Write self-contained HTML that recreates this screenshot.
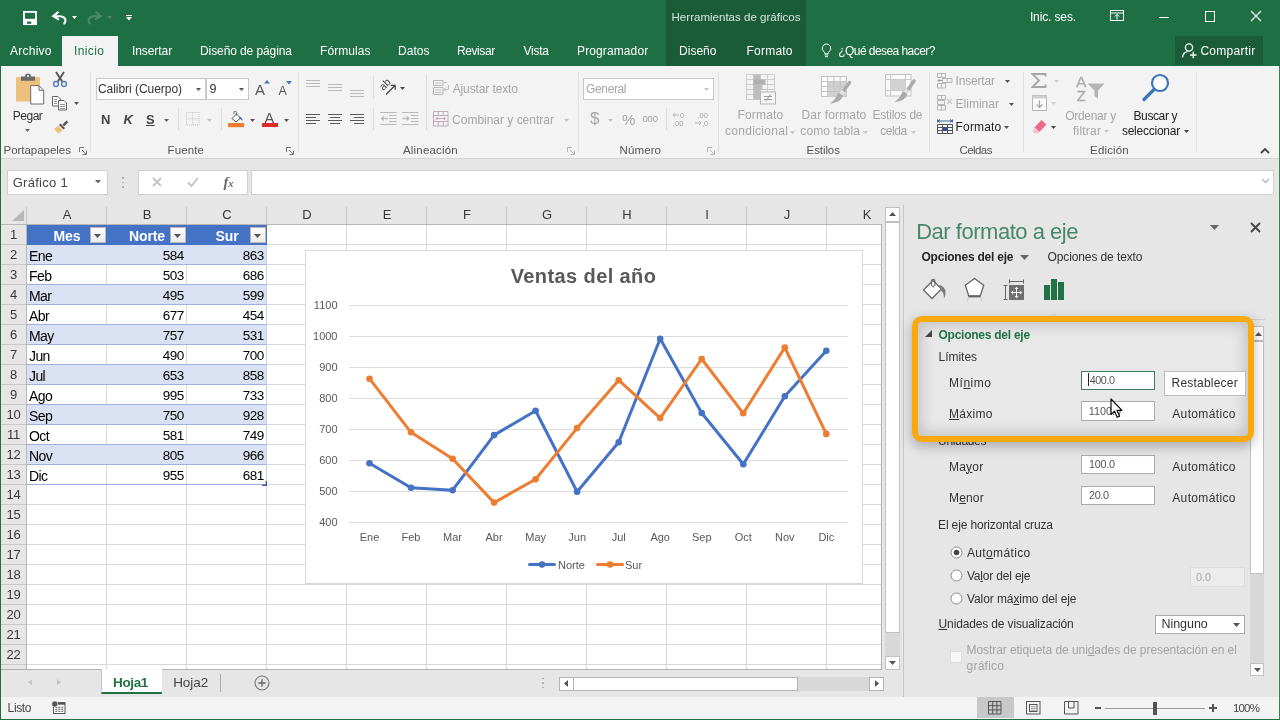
<!DOCTYPE html>
<html lang="es"><head><meta charset="utf-8"><title>Excel - Dar formato a eje</title>
<style>
html,body{margin:0;padding:0}
body{width:1280px;height:720px;overflow:hidden;position:relative;background:#e6e6e6;font-family:"Liberation Sans",sans-serif;font-size:12px;color:#444}
.b{position:absolute;display:block;box-sizing:border-box}
.t{position:absolute;white-space:nowrap;line-height:20px;height:20px}
.w{color:#fff}
.tab{font-size:12.5px;color:#fff}
.g{color:#a6a6a6}
.d{color:#333}
.rl{font-size:11.5px;color:#555}
.rt{font-size:12px}
.cell{font-size:14px;color:#000;letter-spacing:-0.6px}
.num{font-size:13.5px;letter-spacing:-0.5px}
.ch{font-size:13px;color:#383838}
.ax{font-size:11px;color:#595959}
.pn{font-size:12.5px;color:#333}
u{text-decoration:underline;text-underline-offset:1px}
#app{position:absolute;left:0;top:0;width:1280px;height:720px;will-change:transform}
</style></head><body><div id="app">
<div class="b" style="left:0px;top:0px;width:1280px;height:66px;background:#1f6f45"></div>
<div class="b" style="left:666px;top:0px;width:140px;height:66px;background:#1a5c38"></div>
<div class="t " style="left:671.56px;top:7px;font-size:11.5px;letter-spacing:0.017px;color:#d5e5dc">Herramientas de gráficos</div>
<div class="b" style="left:62px;top:36px;width:56px;height:30px;background:#f3f3f3"></div>
<div class="t w" style="left:9.98px;top:41px;font-size:12px;letter-spacing:0.251px;">Archivo</div>
<div class="t w" style="left:131.9px;top:41px;font-size:12px;letter-spacing:-0.055px;">Insertar</div>
<div class="t w" style="left:200.02px;top:41px;font-size:12px;letter-spacing:-0.096px;">Diseño de página</div>
<div class="t w" style="left:320.02px;top:41px;font-size:12px;letter-spacing:0.057px;">Fórmulas</div>
<div class="t w" style="left:398.02px;top:41px;font-size:12px;letter-spacing:0.018px;">Datos</div>
<div class="t w" style="left:457.02px;top:41px;font-size:12px;letter-spacing:-0.417px;">Revisar</div>
<div class="t w" style="left:523.45px;top:41px;font-size:12px;letter-spacing:-0.231px;">Vista</div>
<div class="t w" style="left:577.02px;top:41px;font-size:12px;letter-spacing:0.114px;">Programador</div>
<div class="t w" style="left:679.02px;top:41px;font-size:12px;letter-spacing:0.024px;">Diseño</div>
<div class="t w" style="left:746.52px;top:41px;font-size:12px;letter-spacing:0.217px;">Formato</div>
<div class="t w" style="left:838.24px;top:41px;font-size:12px;letter-spacing:-0.555px;">¿Qué desea hacer?</div>
<div class="t " style="left:73.9px;top:41px;font-size:12px;letter-spacing:0.418px;color:#217346">Inicio</div>
<svg class="b" style="left:820px;top:43px;" width="13" height="15" viewBox="0 0 13 15"><path d="M6.5 1a4.3 4.3 0 0 0-2.6 7.7c.5.5.8 1 .8 1.8h3.6c0-.8.3-1.3.8-1.8A4.3 4.3 0 0 0 6.5 1z" fill="none" stroke="#fff" stroke-width="1"/><path d="M4.7 12h3.6M5 13.7h3" stroke="#fff" stroke-width="1" fill="none"/></svg>
<svg class="b" style="left:22px;top:10px;" width="16" height="16" viewBox="0 0 16 16"><rect x="2" y="1.9" width="12" height="12.2" fill="none" stroke="#fff" stroke-width="1.9"/><rect x="2" y="8.8" width="12" height="5.5" fill="#fff"/><rect x="5" y="11.6" width="4.3" height="2.2" fill="#1f6f45"/></svg>
<svg class="b" style="left:51px;top:10px;" width="17" height="16" viewBox="0 0 17 16"><path d="M7.5 1.8L2.3 6.2l5.6 3.5" fill="none" stroke="#fff" stroke-width="2.1"/><path d="M3.5 6.2h5.5c3.5 0 5.5 2.2 5.5 4.6 0 1.5-.800 2.6-2 3.2" fill="none" stroke="#fff" stroke-width="2.1"/></svg>
<svg class="b" style="left:72px;top:16px;" width="5" height="3" viewBox="0 0 5 3"><path d="M0 0H5L2.5 3Z" fill="#fff"/></svg>
<svg class="b" style="left:86px;top:10px;" width="17" height="16" viewBox="0 0 17 16"><path d="M9.5 1.8l5.2 4.4-5.6 3.5" fill="none" stroke="#4a8c69" stroke-width="2.1"/><path d="M13.5 6.2H8c-3.5 0-5.5 2.2-5.5 4.6 0 1.5.80 2.6 2 3.2" fill="none" stroke="#4a8c69" stroke-width="2.1"/></svg>
<svg class="b" style="left:107px;top:16px;" width="5" height="3" viewBox="0 0 5 3"><path d="M0 0H5L2.5 3Z" fill="#4a8c69"/></svg>
<div class="b" style="left:126px;top:14.5px;width:6px;height:1.5px;background:#fff"></div>
<svg class="b" style="left:126px;top:17.25px;" width="6" height="3.5" viewBox="0 0 6 3.5"><path d="M0 0H6L3 3.5Z" fill="#fff"/></svg>
<div class="t w" style="left:1029.9px;top:7px;font-size:12px;letter-spacing:-0.128px;">Inic. ses.</div>
<svg class="b" style="left:1110px;top:10px;" width="15" height="12" viewBox="0 0 15 12"><rect x=".5" y=".5" width="13" height="10" fill="none" stroke="#fff"/><path d="M.5 3h13" stroke="#fff"/><path d="M7 9.5v-5M4.8 6.5L7 4.3l2.2 2.2" fill="none" stroke="#fff"/></svg>
<div class="b" style="left:1159px;top:16.5px;width:10px;height:1px;background:#fff"></div>
<div class="b" style="left:1204.5px;top:11px;width:10.5px;height:10.5px;border:1px solid #fff"></div>
<svg class="b" style="left:1250px;top:10px;" width="12" height="12" viewBox="0 0 12 12"><path d="M1 1l10 10M11 1L1 11" stroke="#fff" stroke-width="1.1"/></svg>
<div class="b" style="left:1175px;top:36px;width:87.5px;height:28.5px;background:#1a5c38"></div>
<svg class="b" style="left:1181px;top:42px;" width="17" height="17" viewBox="0 0 17 17"><circle cx="8" cy="5.5" r="3.6" fill="none" stroke="#fff" stroke-width="1.3"/><path d="M1.5 15.5c.3-3.2 2.3-5.3 5-5.8" fill="none" stroke="#fff" stroke-width="1.3"/><path d="M9 13h6.5M12.25 9.8v6.4" stroke="#fff" stroke-width="1.3"/></svg>
<div class="t w" style="left:1200.4px;top:41px;font-size:12px;letter-spacing:0.264px;">Compartir</div>
<div class="b" style="left:0px;top:66px;width:1280px;height:92px;background:#f3f3f3"></div>
<div class="b" style="left:0px;top:158px;width:1280px;height:1px;background:#d4d4d4"></div>
<div class="b" style="left:90px;top:72px;width:1px;height:80px;background:#e0e0e0"></div>
<div class="b" style="left:297.5px;top:72px;width:1px;height:80px;background:#e0e0e0"></div>
<div class="b" style="left:578px;top:72px;width:1px;height:80px;background:#e0e0e0"></div>
<div class="b" style="left:718px;top:72px;width:1px;height:80px;background:#e0e0e0"></div>
<div class="b" style="left:929px;top:72px;width:1px;height:80px;background:#e0e0e0"></div>
<div class="b" style="left:1023px;top:72px;width:1px;height:80px;background:#e0e0e0"></div>
<div class="b" style="left:1196px;top:72px;width:1px;height:80px;background:#e0e0e0"></div>
<div class="t " style="left:3.56px;top:140px;font-size:11.5px;letter-spacing:-0.037px;color:#555">Portapapeles</div>
<div class="t " style="left:167.56px;top:140px;font-size:11.5px;letter-spacing:0.13px;color:#555">Fuente</div>
<div class="t " style="left:402.98px;top:140px;font-size:11.5px;letter-spacing:0.189px;color:#555">Alineación</div>
<div class="t " style="left:619.56px;top:140px;font-size:11.5px;letter-spacing:0.102px;color:#555">Número</div>
<div class="t " style="left:806.56px;top:140px;font-size:11.5px;letter-spacing:-0.085px;color:#555">Estilos</div>
<div class="t " style="left:959.42px;top:140px;font-size:11.5px;letter-spacing:-0.562px;color:#555">Celdas</div>
<div class="t " style="left:1090.06px;top:140px;font-size:11.5px;letter-spacing:0.16px;color:#555">Edición</div>
<svg class="b" style="left:79px;top:147px;" width="8" height="8" viewBox="0 0 8 8"><path d="M.5 5V.500H5" fill="none" stroke="#777"/><path d="M3 3l4 4M7.5 3.5v4h-4" fill="none" stroke="#777"/></svg>
<svg class="b" style="left:286px;top:147px;" width="8" height="8" viewBox="0 0 8 8"><path d="M.5 5V.500H5" fill="none" stroke="#777"/><path d="M3 3l4 4M7.5 3.5v4h-4" fill="none" stroke="#777"/></svg>
<svg class="b" style="left:567px;top:147px;" width="8" height="8" viewBox="0 0 8 8"><path d="M.5 5V.500H5" fill="none" stroke="#b5b5b5"/><path d="M3 3l4 4M7.5 3.5v4h-4" fill="none" stroke="#b5b5b5"/></svg>
<svg class="b" style="left:707px;top:147px;" width="8" height="8" viewBox="0 0 8 8"><path d="M.5 5V.500H5" fill="none" stroke="#b5b5b5"/><path d="M3 3l4 4M7.5 3.5v4h-4" fill="none" stroke="#b5b5b5"/></svg>
<svg class="b" style="left:15px;top:73px;" width="31" height="32" viewBox="0 0 31 32"><rect x="1" y="4" width="24" height="24.5" fill="#eec07e"/><path d="M6 7.8V3.5h4a3 3 0 0 1 6 0h4v4.3z" fill="#6a6a6a"/><circle cx="13" cy="3" r="1.1" fill="#f3f3f3"/><path d="M15.7 12.6h8.3l4.7 4.7v13.7h-13z" fill="#fff" stroke="#6a6a6a" stroke-width="1"/><path d="M24 12.6v4.7h4.7" fill="none" stroke="#6a6a6a"/></svg>
<div class="t " style="left:12.82px;top:105.5px;font-size:12px;letter-spacing:-0.51px;color:#333">Pegar</div>
<svg class="b" style="left:25px;top:129px;" width="5" height="3" viewBox="0 0 5 3"><path d="M0 0H5L2.5 3Z" fill="#666"/></svg>
<svg class="b" style="left:52px;top:71px;" width="16" height="17" viewBox="0 0 16 17"><path d="M4 1l6.5 10M12 1L5.5 11" stroke="#555" stroke-width="1.9" fill="none"/><circle cx="4" cy="13" r="2.4" fill="none" stroke="#5b80c2" stroke-width="1.5"/><circle cx="12" cy="13" r="2.4" fill="none" stroke="#5b80c2" stroke-width="1.5"/></svg>
<svg class="b" style="left:51.5px;top:96px;" width="16" height="15" viewBox="0 0 16 15"><path d="M.5.5h5.5l2.5 2.5v7h-8z" fill="#fff" stroke="#666"/><path d="M6.5 4.5h5.5l2.5 2.5v7h-8z" fill="#fff" stroke="#666"/><path d="M8 8.5h5M8 10.5h5M8 12.5h5M2 3.5h3M2 5.5h3M2 7.5h3" stroke="#777" stroke-width=".8"/></svg>
<svg class="b" style="left:74px;top:102px;" width="5" height="3" viewBox="0 0 5 3"><path d="M0 0H5L2.5 3Z" fill="#555"/></svg>
<svg class="b" style="left:52.5px;top:118.5px;" width="16" height="15" viewBox="0 0 16 15"><path d="M9.5 5.5l4-4 1.8 1.8-4 4z" fill="#555"/><path d="M7.5 4.5l4.5 4.5-1.5 1.5-4.5-4.5z" fill="#555"/><path d="M5.3 6.8l4.4 4.4-4.2 3.3-4.5-4.5z" fill="#edc07c"/></svg>
<div class="b" style="left:95.5px;top:77.5px;width:110px;height:22px;background:#fff;border:1px solid #c8c8c8"></div>
<div class="b" style="left:205.5px;top:77.5px;width:43.5px;height:22px;background:#fff;border:1px solid #c8c8c8;border-left:1px solid #c8c8c8"></div>
<div class="t " style="left:97.9px;top:78.5px;font-size:12px;letter-spacing:-0.037px;color:#333">Calibri (Cuerpo)</div>
<svg class="b" style="left:196px;top:87.5px;" width="5" height="3" viewBox="0 0 5 3"><path d="M0 0H5L2.5 3Z" fill="#555"/></svg>
<div class="t d" style="left:209.5px;top:78.5px;font-size:12.5px">9</div>
<svg class="b" style="left:239px;top:87.5px;" width="5" height="3" viewBox="0 0 5 3"><path d="M0 0H5L2.5 3Z" fill="#555"/></svg>
<div class="t d" style="left:255px;top:79.5px;font-size:15px;color:#555">A</div>
<svg class="b" style="left:264px;top:80px;" width="6" height="4" viewBox="0 0 6 4"><path d="M0 3.5L3 0l3 3.5z" fill="#4472c4"/></svg>
<div class="t d" style="left:278.5px;top:80.5px;font-size:12.5px;color:#555">A</div>
<svg class="b" style="left:285.5px;top:80.5px;" width="6" height="4" viewBox="0 0 6 4"><path d="M0 0h6L3 3.5z" fill="#4472c4"/></svg>
<div class="t d" style="left:101px;top:109.5px;font-weight:bold;font-size:13px;color:#444">N</div>
<div class="t d" style="left:123.5px;top:109.5px;font-weight:bold;font-style:italic;font-size:13px;color:#444">K</div>
<div class="t d" style="left:146px;top:109.5px;font-weight:bold;font-size:13px;color:#444"><u>S</u></div>
<svg class="b" style="left:164px;top:118.5px;" width="5" height="3" viewBox="0 0 5 3"><path d="M0 0H5L2.5 3Z" fill="#666"/></svg>
<div class="b" style="left:177.5px;top:108px;width:1px;height:22px;background:#dcdcdc"></div>
<svg class="b" style="left:186px;top:112px;" width="14" height="14" viewBox="0 0 14 14"><path d="M.5.5h12.5v12.5h-12.5zM6.75.5v12.5M.5 6.75h12.5" fill="none" stroke="#c4c4c4" stroke-dasharray="1 1"/></svg>
<svg class="b" style="left:207px;top:118.5px;" width="5" height="3" viewBox="0 0 5 3"><path d="M0 0H5L2.5 3Z" fill="#c4c4c4"/></svg>
<div class="b" style="left:220.5px;top:108px;width:1px;height:22px;background:#dcdcdc"></div>
<svg class="b" style="left:228px;top:111px;" width="17" height="17" viewBox="0 0 17 17"><rect x="0" y="12" width="16" height="4.2" fill="#ed7d31"/><path d="M4 7.5l4.5-4.5 4 4-4.5 4z" fill="#fff" stroke="#555" stroke-width="1"/><path d="M6 3V1.3a1.2 1.2 0 0 1 2.4 0V4.5" fill="none" stroke="#555" stroke-width=".9"/><path d="M11.5 5.5c2 .8 3.3 2.3 3.3 4.5-1.3-1.5-2.3-2-3.8-1.8" fill="#4472c4"/></svg>
<svg class="b" style="left:250px;top:118.5px;" width="5" height="3" viewBox="0 0 5 3"><path d="M0 0H5L2.5 3Z" fill="#555"/></svg>
<div class="t d" style="left:264.5px;top:107.5px;font-size:14.5px;color:#555">A</div>
<div class="b" style="left:262px;top:123px;width:16px;height:4.2px;background:#e02b2b"></div>
<svg class="b" style="left:284px;top:118.5px;" width="5" height="3" viewBox="0 0 5 3"><path d="M0 0H5L2.5 3Z" fill="#555"/></svg>
<div class="b" style="left:305.5px;top:80px;width:14.5px;height:1px;background:#b9b9b9"></div><div class="b" style="left:305.5px;top:83px;width:14.5px;height:1px;background:#b9b9b9"></div><div class="b" style="left:305.5px;top:86px;width:14.5px;height:1px;background:#b9b9b9"></div>
<div class="b" style="left:327.5px;top:84px;width:14.5px;height:1px;background:#b9b9b9"></div><div class="b" style="left:327.5px;top:87px;width:14.5px;height:1px;background:#b9b9b9"></div><div class="b" style="left:327.5px;top:90px;width:14.5px;height:1px;background:#b9b9b9"></div>
<div class="b" style="left:349.5px;top:89.5px;width:14.5px;height:1px;background:#b9b9b9"></div><div class="b" style="left:349.5px;top:92.5px;width:14.5px;height:1px;background:#b9b9b9"></div><div class="b" style="left:349.5px;top:95.5px;width:14.5px;height:1px;background:#b9b9b9"></div>
<div class="b" style="left:372.5px;top:76px;width:1px;height:23px;background:#dcdcdc"></div>
<svg class="b" style="left:378px;top:77px;" width="20" height="20" viewBox="0 0 20 20"><text x="7.5" y="10.5" text-anchor="middle" font-family="Liberation Sans,sans-serif" font-size="10.5" fill="#444" transform="rotate(-45 7.5 8)">ab</text><path d="M8 17.5L17 8.5M12.8 8.3h4.4v4.4" fill="none" stroke="#444" stroke-width="1.2"/></svg>
<svg class="b" style="left:400px;top:87px;" width="5" height="3" viewBox="0 0 5 3"><path d="M0 0H5L2.5 3Z" fill="#444"/></svg>
<div class="b" style="left:425.5px;top:75px;width:1px;height:55px;background:#dcdcdc"></div>
<svg class="b" style="left:433px;top:80px;" width="17" height="15" viewBox="0 0 17 15"><path d="M.5.5h9.5v5h-9.5zM.5 7.5h9.5v7h-9.5z" fill="none" stroke="#b9b9b9"/><path d="M2 3h6.5M2 10h6.5M2 12.5h6.5M11 2.5h3" stroke="#b9b9b9" stroke-width=".9"/><path d="M15.5 5v4.5h-4M13 7.5l-2 2 2 2" fill="none" stroke="#b9b9b9"/></svg>
<div class="t g" style="left:452.68px;top:78.5px;font-size:12px;letter-spacing:-0.115px;">Ajustar texto</div>
<div class="b" style="left:305.5px;top:114px;width:14.5px;height:1px;background:#5a5a5a"></div><div class="b" style="left:305.5px;top:117px;width:10.5px;height:1px;background:#5a5a5a"></div><div class="b" style="left:305.5px;top:120px;width:14.5px;height:1px;background:#5a5a5a"></div><div class="b" style="left:305.5px;top:123px;width:10.5px;height:1px;background:#5a5a5a"></div>
<div class="b" style="left:327.5px;top:114px;width:14.5px;height:1px;background:#5a5a5a"></div><div class="b" style="left:329.5px;top:117px;width:10.5px;height:1px;background:#5a5a5a"></div><div class="b" style="left:327.5px;top:120px;width:14.5px;height:1px;background:#5a5a5a"></div><div class="b" style="left:329.5px;top:123px;width:10.5px;height:1px;background:#5a5a5a"></div>
<div class="b" style="left:349.5px;top:114px;width:14.5px;height:1px;background:#5a5a5a"></div><div class="b" style="left:353.5px;top:117px;width:10.5px;height:1px;background:#5a5a5a"></div><div class="b" style="left:349.5px;top:120px;width:14.5px;height:1px;background:#5a5a5a"></div><div class="b" style="left:353.5px;top:123px;width:10.5px;height:1px;background:#5a5a5a"></div>
<div class="b" style="left:372.5px;top:108px;width:1px;height:22px;background:#dcdcdc"></div>
<svg class="b" style="left:380px;top:112px;" width="17" height="14" viewBox="0 0 17 14"><path d="M0 .5h16.5M9 3.5h7.5M9 6.5h7.5M9 9.5h7.5M0 12.5h16.5" stroke="#b9b9b9"/><path d="M8 6.5H2" stroke="#b9b9b9" stroke-width="1.3"/><path d="M3.8 3.8L.8 6.5l3 2.7z" fill="#b9b9b9"/></svg>
<svg class="b" style="left:401.5px;top:112px;" width="17" height="14" viewBox="0 0 17 14"><path d="M0 .5h16.5M9 3.5h7.5M9 6.5h7.5M9 9.5h7.5M0 12.5h16.5" stroke="#b9b9b9"/><path d="M.5 6.5h6" stroke="#b9b9b9" stroke-width="1.3"/><path d="M4.7 3.8l3 2.7-3 2.7z" fill="#b9b9b9"/></svg>
<svg class="b" style="left:433px;top:111px;" width="16" height="16" viewBox="0 0 16 16"><path d="M.5.5h14.5v14.5H.5zM.5 4.5h14.5M.5 10.5h14.5M5.3.50v4M10.2.50v4M5.3 10.5v4.5M10.2 10.5v4.5" fill="none" stroke="#c3a9b6"/><path d="M3 7.5h9.5M4.5 6L3 7.5 4.5 9M11 6l1.5 1.5L11 9" fill="none" stroke="#c3a9b6"/></svg>
<div class="t g" style="left:452.1px;top:109.5px;font-size:12px;letter-spacing:-0.014px;">Combinar y centrar</div>
<svg class="b" style="left:564px;top:118.5px;" width="5" height="3" viewBox="0 0 5 3"><path d="M0 0H5L2.5 3Z" fill="#c4c4c4"/></svg>
<div class="b" style="left:583px;top:77.5px;width:130.5px;height:22px;background:#fff;border:1px solid #c8c8c8"></div>
<div class="t g" style="left:586.1px;top:78.5px;font-size:12px;letter-spacing:-0.382px;">General</div>
<svg class="b" style="left:704px;top:87.5px;" width="5" height="3" viewBox="0 0 5 3"><path d="M0 0H5L2.5 3Z" fill="#c4c4c4"/></svg>
<div class="t g" style="left:590px;top:109px;font-size:17px">$</div>
<svg class="b" style="left:608px;top:118.5px;" width="5" height="3" viewBox="0 0 5 3"><path d="M0 0H5L2.5 3Z" fill="#c4c4c4"/></svg>
<div class="t g" style="left:622px;top:109.5px;font-size:15px;letter-spacing:-.5px">%</div>
<div class="t g" style="left:642.5px;top:109px;font-size:9.5px;letter-spacing:-.2px">000</div>
<div class="b" style="left:665.5px;top:108px;width:1px;height:22px;background:#dcdcdc"></div>
<svg class="b" style="left:672px;top:111px;" width="17" height="17" viewBox="0 0 17 17"><path d="M1 4h6M3 2L1 4l2 2" fill="none" stroke="#b5b5b5"/><text x="8" y="7" font-family="Liberation Sans,sans-serif" font-size="7.5" fill="#a6a6a6">0</text><text x="1" y="15" font-family="Liberation Sans,sans-serif" font-size="7.5" fill="#a6a6a6">,00</text></svg>
<svg class="b" style="left:694px;top:111px;" width="17" height="17" viewBox="0 0 17 17"><text x="3.5" y="7" font-family="Liberation Sans,sans-serif" font-size="7.5" fill="#a6a6a6">,00</text><path d="M1 12h6M5 10l2 2-2 2" fill="none" stroke="#b5b5b5"/><text x="8" y="15" font-family="Liberation Sans,sans-serif" font-size="7.5" fill="#a6a6a6">,0</text></svg>
<svg class="b" style="left:745.5px;top:73.5px;" width="31" height="31" viewBox="0 0 31 31"><path d="M0 0.5h28" stroke="#c9c9c9" stroke-width=".9"/><path d="M0 5.5h28" stroke="#c9c9c9" stroke-width=".9"/><path d="M0 10.5h28" stroke="#c9c9c9" stroke-width=".9"/><path d="M0 15.5h28" stroke="#c9c9c9" stroke-width=".9"/><path d="M0 20.5h28" stroke="#c9c9c9" stroke-width=".9"/><path d="M0 25.5h28" stroke="#c9c9c9" stroke-width=".9"/><path d="M0.5 0v25" stroke="#c9c9c9" stroke-width=".9"/><path d="M7.5 0v25" stroke="#c9c9c9" stroke-width=".9"/><path d="M14.5 0v25" stroke="#c9c9c9" stroke-width=".9"/><path d="M21.5 0v25" stroke="#c9c9c9" stroke-width=".9"/><path d="M28.5 0v25" stroke="#c9c9c9" stroke-width=".9"/><rect x="7.5" y=".500" width="7" height="25" fill="#bdbdbd"/><rect x="7.5" y="5.5" width="12" height="5" fill="#b0b0b0"/><rect x="7.5" y="10.5" width="9" height="5" fill="#bdbdbd"/><rect x="14.5" y="18" width="15" height="12" fill="#f6f6f6" stroke="#b5b5b5"/><path d="M18 22.5h8M18 25.5h8M24.5 20.5l-5 7" stroke="#9a9a9a" stroke-width="1" fill="none"/></svg>
<div class="t g" style="left:737.42px;top:105px;font-size:12px;letter-spacing:0.183px;">Formato</div>
<div class="t g" style="left:725px;top:121px;font-size:12px;letter-spacing:0.276px;">condicional</div>
<svg class="b" style="left:790px;top:130.5px;" width="5" height="3" viewBox="0 0 5 3"><path d="M0 0H5L2.5 3Z" fill="#c8c8c8"/></svg>
<svg class="b" style="left:820.5px;top:76px;" width="31" height="29" viewBox="0 0 31 29"><rect x=".5" y=".5" width="25" height="20" fill="#fafafa" stroke="#c2c2c2"/><rect x="6.5" y="5.5" width="19" height="15" fill="#d2d2d2"/><path d="M.5 5.5h25" stroke="#c2c2c2" stroke-width=".9"/><path d="M.5 10.5h25" stroke="#c2c2c2" stroke-width=".9"/><path d="M.5 15.5h25" stroke="#c2c2c2" stroke-width=".9"/><path d="M6.75 .5v20" stroke="#c2c2c2" stroke-width=".9"/><path d="M13 .5v20" stroke="#c2c2c2" stroke-width=".9"/><path d="M19.25 .5v20" stroke="#c2c2c2" stroke-width=".9"/><path d="M28.5 6.5L22.5 15" stroke="#ababab" stroke-width="3.4" stroke-linecap="round"/><path d="M22.3 15.3l-2.3 3.2" stroke="#e2e2e2" stroke-width="4.4"/><path d="M17.3 16.5l4.7 3.3c-1.5 4.2-6 7.7-13.5 7.7 3.8-1.8 6.3-5 8.8-11z" fill="#ababab"/></svg>
<div class="t g" style="left:801.52px;top:105px;font-size:12px;letter-spacing:0.143px;">Dar formato</div>
<div class="t g" style="left:800.3px;top:121px;font-size:12px;letter-spacing:0.111px;">como tabla</div>
<svg class="b" style="left:863px;top:130.5px;" width="5" height="3" viewBox="0 0 5 3"><path d="M0 0H5L2.5 3Z" fill="#c8c8c8"/></svg>
<svg class="b" style="left:884.5px;top:73.5px;" width="31" height="30" viewBox="0 0 31 30"><rect x=".5" y=".5" width="25.5" height="21.5" fill="#fafafa" stroke="#c2c2c2"/><path d="M.5 5.5h25.5M.5 16.5h25.5M5.5 .5v21.5M20.5 .5v21.5" stroke="#c2c2c2" stroke-width=".9"/><rect x="5.5" y="5.5" width="15" height="11" fill="#d2d2d2"/><path d="M29 7L23 15.5" stroke="#ababab" stroke-width="3.4" stroke-linecap="round"/><path d="M22.8 15.8l-2.3 3.2" stroke="#e2e2e2" stroke-width="4.4"/><path d="M17.8 17l4.7 3.3c-1.5 4.2-6 7.7-13.5 7.7 3.8-1.8 6.3-5 8.8-11z" fill="#ababab"/></svg>
<div class="t g" style="left:872.52px;top:105px;font-size:12px;letter-spacing:-0.223px;">Estilos de</div>
<div class="t g" style="left:880.2px;top:121px;font-size:12px;letter-spacing:-0.397px;">celda</div>
<svg class="b" style="left:911px;top:130.5px;" width="5" height="3" viewBox="0 0 5 3"><path d="M0 0H5L2.5 3Z" fill="#c8c8c8"/></svg>
<svg class="b" style="left:937px;top:72.5px;" width="16" height="16" viewBox="0 0 16 16"><path d="M.5 .5h8v4h-8zM.5 10.5h8v4.5h-8zM4.5 .5v4M4.5 10.5v4.5" fill="none" stroke="#b5b5b5"/><path d="M5.5 5.5h9.5v4h-9.5zM10.25 5.5v4" fill="none" stroke="#b5b5b5"/><path d="M5 7.5H1M2.5 6L1 7.5 2.5 9" fill="none" stroke="#9a9a9a"/></svg>
<div class="t g" style="left:955.5px;top:71px;font-size:12px;letter-spacing:-0.169px;">Insertar</div>
<svg class="b" style="left:1005px;top:80px;" width="5" height="3" viewBox="0 0 5 3"><path d="M0 0H5L2.5 3Z" fill="#555"/></svg>
<svg class="b" style="left:937px;top:95px;" width="16" height="16" viewBox="0 0 16 16"><path d="M.5 .5h8v4h-8zM.5 10.5h8v4.5h-8zM4.5 .5v4M4.5 10.5v4.5" fill="none" stroke="#b5b5b5"/><path d="M.5 5.5h7v4h-7z" fill="none" stroke="#b5b5b5"/><path d="M10 4l5 5M15 4l-5 5" fill="none" stroke="#c8c8c8" stroke-width="1.2"/></svg>
<div class="t g" style="left:955.62px;top:94px;font-size:12px;letter-spacing:-0.01px;">Eliminar</div>
<svg class="b" style="left:1008.9px;top:103px;" width="5" height="3" viewBox="0 0 5 3"><path d="M0 0H5L2.5 3Z" fill="#555"/></svg>
<svg class="b" style="left:937px;top:118px;" width="16" height="16" viewBox="0 0 16 16"><path d="M.5 1.5v3M15.5 1.5v3M1 3h14M3 1.5L1 3l2 1.5M13 1.5l2 1.5-2 1.5" fill="none" stroke="#2b579a" stroke-width=".9"/><path d="M.5 6.5h15v9h-15zM.5 9.5h15M.5 12.5h15M5.5 6.5v9M10.5 6.5v9" fill="none" stroke="#555"/><rect x="5.5" y="9.5" width="5" height="3" fill="#2b579a"/></svg>
<div class="t " style="left:955.62px;top:117px;font-size:12px;letter-spacing:0.133px;color:#222">Formato</div>
<svg class="b" style="left:1004px;top:126px;" width="5" height="3" viewBox="0 0 5 3"><path d="M0 0H5L2.5 3Z" fill="#555"/></svg>
<svg class="b" style="left:1030.5px;top:72.5px;" width="16" height="15" viewBox="0 0 16 15"><path d="M14.5 3.5V1H1.5l6.5 6.5L1.5 14h13v-2.5" fill="none" stroke="#a6a6a6" stroke-width="1.8"/></svg>
<svg class="b" style="left:1053.5px;top:80px;" width="5" height="3" viewBox="0 0 5 3"><path d="M0 0H5L2.5 3Z" fill="#cfcfcf"/></svg>
<svg class="b" style="left:1031.5px;top:95px;" width="15" height="16" viewBox="0 0 15 16"><rect x=".5" y=".5" width="14" height="15" fill="#fbfbfb" stroke="#b5b5b5"/><rect x=".5" y=".5" width="14" height="3" fill="#d0d0d0"/><path d="M7.5 5.5v7M4.5 9.5l3 3 3-3" fill="none" stroke="#a6a6a6" stroke-width="1.2"/></svg>
<svg class="b" style="left:1050.5px;top:102px;" width="5" height="3" viewBox="0 0 5 3"><path d="M0 0H5L2.5 3Z" fill="#cfcfcf"/></svg>
<svg class="b" style="left:1031.5px;top:119px;" width="16" height="15" viewBox="0 0 16 15"><path d="M9.5 1l5 4.5-7 7.5-5-4.5z" fill="#ec6a86"/><path d="M2.5 8.5l5 4.5-1.8 1.5H2.5L.5 12.5z" fill="#f7c3cf"/></svg>
<svg class="b" style="left:1051px;top:126px;" width="5" height="3" viewBox="0 0 5 3"><path d="M0 0H5L2.5 3Z" fill="#444"/></svg>
<svg class="b" style="left:1075.5px;top:74.5px;" width="30" height="28" viewBox="0 0 30 28"><text x="0" y="12" font-family="Liberation Sans,sans-serif" font-size="15.5" fill="#ababab" stroke="#ababab" stroke-width=".3">A</text><text x="0.8" y="26" font-family="Liberation Sans,sans-serif" font-size="15" fill="#ababab" stroke="#ababab" stroke-width=".3">Z</text><path d="M11.5 8.5h17l-6.5 7v8l-3.5-2.5v-5.5z" fill="#b5b5b5"/></svg>
<div class="t g" style="left:1065.14px;top:105.5px;font-size:12px;letter-spacing:-0.283px;">Ordenar y</div>
<div class="t g" style="left:1073.03px;top:120.5px;font-size:12px;letter-spacing:0.199px;">filtrar</div>
<svg class="b" style="left:1103.5px;top:130px;" width="5" height="3" viewBox="0 0 5 3"><path d="M0 0H5L2.5 3Z" fill="#c8c8c8"/></svg>
<svg class="b" style="left:1141px;top:73px;" width="30" height="29" viewBox="0 0 30 29"><circle cx="19" cy="10" r="8" fill="#fff" stroke="#3a75b8" stroke-width="2.2"/><path d="M13 16.5L3 26.5" stroke="#3a75b8" stroke-width="3.2" stroke-linecap="round"/></svg>
<div class="t " style="left:1133.52px;top:105.5px;font-size:12px;letter-spacing:-0.396px;color:#222">Buscar y</div>
<div class="t " style="left:1121.88px;top:120.5px;font-size:12px;letter-spacing:-0.238px;color:#222">seleccionar</div>
<svg class="b" style="left:1183.5px;top:130px;" width="5" height="3" viewBox="0 0 5 3"><path d="M0 0H5L2.5 3Z" fill="#444"/></svg>
<svg class="b" style="left:1259.5px;top:146.5px;" width="10" height="7" viewBox="0 0 10 7"><path d="M1 6L5 2l4 4" fill="none" stroke="#444" stroke-width="1.8"/></svg>
<div class="b" style="left:6.5px;top:169.5px;width:101.5px;height:25px;background:#fff;border:1px solid #d0d0d0"></div>
<div class="t " style="left:12.65px;top:172.5px;font-size:13px;letter-spacing:0.279px;color:#444">Gráfico 1</div>
<svg class="b" style="left:94.5px;top:179.75px;" width="6" height="3.5" viewBox="0 0 6 3.5"><path d="M0 0H6L3 3.5Z" fill="#666"/></svg>
<div class="b" style="left:122px;top:177px;width:1.5px;height:1.5px;background:#b0b0b0"></div>
<div class="b" style="left:122px;top:181.5px;width:1.5px;height:1.5px;background:#b0b0b0"></div>
<div class="b" style="left:122px;top:186px;width:1.5px;height:1.5px;background:#b0b0b0"></div>
<div class="b" style="left:138px;top:169.5px;width:110px;height:25px;background:#fff;border:1px solid #d0d0d0"></div>
<svg class="b" style="left:152px;top:177px;" width="10" height="10" viewBox="0 0 10 10"><path d="M1 1l8 8M9 1L1 9" stroke="#c4c4c4" stroke-width="1.8"/></svg>
<svg class="b" style="left:187px;top:177px;" width="12" height="10" viewBox="0 0 12 10"><path d="M1 5.5l3.5 3.5L11 1" fill="none" stroke="#c4c4c4" stroke-width="1.9"/></svg>
<div class="t " style="left:223.5px;top:171.5px;font-family:'Liberation Serif',serif;font-size:15px;color:#6a6a6a;font-weight:bold;letter-spacing:-.3px"><i>f</i><span style="font-size:10.5px"><i>x</i></span></div>
<div class="b" style="left:251px;top:169.5px;width:1022.5px;height:25px;background:#fff;border:1px solid #d0d0d0"></div>
<svg class="b" style="left:1261px;top:178px;" width="9" height="7" viewBox="0 0 9 7"><path d="M1 1l3.5 3.5L8 1" fill="none" stroke="#b5b5b5" stroke-width="1.3"/></svg>
<div class="b" style="left:0px;top:205px;width:882px;height:20px;background:#e6e6e6"></div>
<div class="b" style="left:27px;top:225px;width:855px;height:445px;background:#fff"></div>
<div class="b" style="left:0px;top:225px;width:27px;height:445px;background:#e6e6e6"></div>
<svg class="b" style="left:12px;top:210px;" width="12" height="11" viewBox="0 0 12 11"><path d="M12 0v11H0z" fill="#b8b8b8"/></svg>
<div class="t ch" style="left:27px;top:205px;width:80px;text-align:center">A</div>
<div class="t ch" style="left:107px;top:205px;width:80px;text-align:center">B</div>
<div class="b" style="left:106px;top:207px;width:1px;height:18px;background:#c9c9c9"></div>
<div class="t ch" style="left:187px;top:205px;width:80px;text-align:center">C</div>
<div class="b" style="left:186px;top:207px;width:1px;height:18px;background:#c9c9c9"></div>
<div class="t ch" style="left:267px;top:205px;width:80px;text-align:center">D</div>
<div class="b" style="left:266px;top:207px;width:1px;height:18px;background:#c9c9c9"></div>
<div class="t ch" style="left:347px;top:205px;width:80px;text-align:center">E</div>
<div class="b" style="left:346px;top:207px;width:1px;height:18px;background:#c9c9c9"></div>
<div class="t ch" style="left:427px;top:205px;width:80px;text-align:center">F</div>
<div class="b" style="left:426px;top:207px;width:1px;height:18px;background:#c9c9c9"></div>
<div class="t ch" style="left:507px;top:205px;width:80px;text-align:center">G</div>
<div class="b" style="left:506px;top:207px;width:1px;height:18px;background:#c9c9c9"></div>
<div class="t ch" style="left:587px;top:205px;width:80px;text-align:center">H</div>
<div class="b" style="left:586px;top:207px;width:1px;height:18px;background:#c9c9c9"></div>
<div class="t ch" style="left:667px;top:205px;width:80px;text-align:center">I</div>
<div class="b" style="left:666px;top:207px;width:1px;height:18px;background:#c9c9c9"></div>
<div class="t ch" style="left:747px;top:205px;width:80px;text-align:center">J</div>
<div class="b" style="left:746px;top:207px;width:1px;height:18px;background:#c9c9c9"></div>
<div class="t ch" style="left:827px;top:205px;width:80px;text-align:center">K</div>
<div class="b" style="left:826px;top:207px;width:1px;height:18px;background:#c9c9c9"></div>
<div class="b" style="left:26px;top:207px;width:1px;height:18px;background:#c9c9c9"></div>
<div class="b" style="left:0px;top:224px;width:882px;height:1px;background:#b7b7b7"></div>
<div class="b" style="left:106px;top:225px;width:1px;height:445px;background:#d8d8d8"></div>
<div class="b" style="left:186px;top:225px;width:1px;height:445px;background:#d8d8d8"></div>
<div class="b" style="left:266px;top:225px;width:1px;height:445px;background:#d8d8d8"></div>
<div class="b" style="left:346px;top:225px;width:1px;height:445px;background:#d8d8d8"></div>
<div class="b" style="left:426px;top:225px;width:1px;height:445px;background:#d8d8d8"></div>
<div class="b" style="left:506px;top:225px;width:1px;height:445px;background:#d8d8d8"></div>
<div class="b" style="left:586px;top:225px;width:1px;height:445px;background:#d8d8d8"></div>
<div class="b" style="left:666px;top:225px;width:1px;height:445px;background:#d8d8d8"></div>
<div class="b" style="left:746px;top:225px;width:1px;height:445px;background:#d8d8d8"></div>
<div class="b" style="left:826px;top:225px;width:1px;height:445px;background:#d8d8d8"></div>
<div class="b" style="left:26px;top:225px;width:1px;height:445px;background:#b7b7b7"></div>
<div class="b" style="left:27px;top:244px;width:855px;height:1px;background:#d8d8d8"></div>
<div class="b" style="left:0px;top:244px;width:26px;height:1px;background:#c9c9c9"></div>
<div class="t ch" style="left:0;top:225px;width:27px;text-align:center;letter-spacing:-.3px">1</div>
<div class="b" style="left:27px;top:264px;width:855px;height:1px;background:#d8d8d8"></div>
<div class="b" style="left:0px;top:264px;width:26px;height:1px;background:#c9c9c9"></div>
<div class="t ch" style="left:0;top:245px;width:27px;text-align:center;letter-spacing:-.3px">2</div>
<div class="b" style="left:27px;top:284px;width:855px;height:1px;background:#d8d8d8"></div>
<div class="b" style="left:0px;top:284px;width:26px;height:1px;background:#c9c9c9"></div>
<div class="t ch" style="left:0;top:265px;width:27px;text-align:center;letter-spacing:-.3px">3</div>
<div class="b" style="left:27px;top:304px;width:855px;height:1px;background:#d8d8d8"></div>
<div class="b" style="left:0px;top:304px;width:26px;height:1px;background:#c9c9c9"></div>
<div class="t ch" style="left:0;top:285px;width:27px;text-align:center;letter-spacing:-.3px">4</div>
<div class="b" style="left:27px;top:324px;width:855px;height:1px;background:#d8d8d8"></div>
<div class="b" style="left:0px;top:324px;width:26px;height:1px;background:#c9c9c9"></div>
<div class="t ch" style="left:0;top:305px;width:27px;text-align:center;letter-spacing:-.3px">5</div>
<div class="b" style="left:27px;top:344px;width:855px;height:1px;background:#d8d8d8"></div>
<div class="b" style="left:0px;top:344px;width:26px;height:1px;background:#c9c9c9"></div>
<div class="t ch" style="left:0;top:325px;width:27px;text-align:center;letter-spacing:-.3px">6</div>
<div class="b" style="left:27px;top:364px;width:855px;height:1px;background:#d8d8d8"></div>
<div class="b" style="left:0px;top:364px;width:26px;height:1px;background:#c9c9c9"></div>
<div class="t ch" style="left:0;top:345px;width:27px;text-align:center;letter-spacing:-.3px">7</div>
<div class="b" style="left:27px;top:384px;width:855px;height:1px;background:#d8d8d8"></div>
<div class="b" style="left:0px;top:384px;width:26px;height:1px;background:#c9c9c9"></div>
<div class="t ch" style="left:0;top:365px;width:27px;text-align:center;letter-spacing:-.3px">8</div>
<div class="b" style="left:27px;top:404px;width:855px;height:1px;background:#d8d8d8"></div>
<div class="b" style="left:0px;top:404px;width:26px;height:1px;background:#c9c9c9"></div>
<div class="t ch" style="left:0;top:385px;width:27px;text-align:center;letter-spacing:-.3px">9</div>
<div class="b" style="left:27px;top:424px;width:855px;height:1px;background:#d8d8d8"></div>
<div class="b" style="left:0px;top:424px;width:26px;height:1px;background:#c9c9c9"></div>
<div class="t ch" style="left:0;top:405px;width:27px;text-align:center;letter-spacing:-.3px">10</div>
<div class="b" style="left:27px;top:444px;width:855px;height:1px;background:#d8d8d8"></div>
<div class="b" style="left:0px;top:444px;width:26px;height:1px;background:#c9c9c9"></div>
<div class="t ch" style="left:0;top:425px;width:27px;text-align:center;letter-spacing:-.3px">11</div>
<div class="b" style="left:27px;top:464px;width:855px;height:1px;background:#d8d8d8"></div>
<div class="b" style="left:0px;top:464px;width:26px;height:1px;background:#c9c9c9"></div>
<div class="t ch" style="left:0;top:445px;width:27px;text-align:center;letter-spacing:-.3px">12</div>
<div class="b" style="left:27px;top:484px;width:855px;height:1px;background:#d8d8d8"></div>
<div class="b" style="left:0px;top:484px;width:26px;height:1px;background:#c9c9c9"></div>
<div class="t ch" style="left:0;top:465px;width:27px;text-align:center;letter-spacing:-.3px">13</div>
<div class="b" style="left:27px;top:504px;width:855px;height:1px;background:#d8d8d8"></div>
<div class="b" style="left:0px;top:504px;width:26px;height:1px;background:#c9c9c9"></div>
<div class="t ch" style="left:0;top:485px;width:27px;text-align:center;letter-spacing:-.3px">14</div>
<div class="b" style="left:27px;top:524px;width:855px;height:1px;background:#d8d8d8"></div>
<div class="b" style="left:0px;top:524px;width:26px;height:1px;background:#c9c9c9"></div>
<div class="t ch" style="left:0;top:505px;width:27px;text-align:center;letter-spacing:-.3px">15</div>
<div class="b" style="left:27px;top:544px;width:855px;height:1px;background:#d8d8d8"></div>
<div class="b" style="left:0px;top:544px;width:26px;height:1px;background:#c9c9c9"></div>
<div class="t ch" style="left:0;top:525px;width:27px;text-align:center;letter-spacing:-.3px">16</div>
<div class="b" style="left:27px;top:564px;width:855px;height:1px;background:#d8d8d8"></div>
<div class="b" style="left:0px;top:564px;width:26px;height:1px;background:#c9c9c9"></div>
<div class="t ch" style="left:0;top:545px;width:27px;text-align:center;letter-spacing:-.3px">17</div>
<div class="b" style="left:27px;top:584px;width:855px;height:1px;background:#d8d8d8"></div>
<div class="b" style="left:0px;top:584px;width:26px;height:1px;background:#c9c9c9"></div>
<div class="t ch" style="left:0;top:565px;width:27px;text-align:center;letter-spacing:-.3px">18</div>
<div class="b" style="left:27px;top:604px;width:855px;height:1px;background:#d8d8d8"></div>
<div class="b" style="left:0px;top:604px;width:26px;height:1px;background:#c9c9c9"></div>
<div class="t ch" style="left:0;top:585px;width:27px;text-align:center;letter-spacing:-.3px">19</div>
<div class="b" style="left:27px;top:624px;width:855px;height:1px;background:#d8d8d8"></div>
<div class="b" style="left:0px;top:624px;width:26px;height:1px;background:#c9c9c9"></div>
<div class="t ch" style="left:0;top:605px;width:27px;text-align:center;letter-spacing:-.3px">20</div>
<div class="b" style="left:27px;top:644px;width:855px;height:1px;background:#d8d8d8"></div>
<div class="b" style="left:0px;top:644px;width:26px;height:1px;background:#c9c9c9"></div>
<div class="t ch" style="left:0;top:625px;width:27px;text-align:center;letter-spacing:-.3px">21</div>
<div class="b" style="left:27px;top:664px;width:855px;height:1px;background:#d8d8d8"></div>
<div class="b" style="left:0px;top:664px;width:26px;height:1px;background:#c9c9c9"></div>
<div class="t ch" style="left:0;top:645px;width:27px;text-align:center;letter-spacing:-.3px">22</div>
<div class="b" style="left:881px;top:225px;width:1px;height:445px;background:#b0b0b0"></div>
<div class="b" style="left:0px;top:669px;width:882px;height:1px;background:#b0b0b0"></div>
<div class="b" style="left:27px;top:225px;width:240px;height:20px;background:#4472c4"></div>
<div class="t" style="left:27px;top:225.7px;width:80px;text-align:center;color:#fff;font-weight:bold;font-size:14px;letter-spacing:-.1px">Mes</div>
<div class="b" style="left:89.5px;top:226.5px;width:16px;height:16.5px;background:linear-gradient(#fefefe,#ececec);border:1px solid #b9b9b9"></div>
<svg class="b" style="left:94px;top:233.5px;" width="7" height="4" viewBox="0 0 7 4"><path d="M0 0H7L3.5 4Z" fill="#555"/></svg>
<div class="t" style="left:107px;top:225.7px;width:80px;text-align:center;color:#fff;font-weight:bold;font-size:14px;letter-spacing:-.1px">Norte</div>
<div class="b" style="left:169.5px;top:226.5px;width:16px;height:16.5px;background:linear-gradient(#fefefe,#ececec);border:1px solid #b9b9b9"></div>
<svg class="b" style="left:174px;top:233.5px;" width="7" height="4" viewBox="0 0 7 4"><path d="M0 0H7L3.5 4Z" fill="#555"/></svg>
<div class="t" style="left:187px;top:225.7px;width:80px;text-align:center;color:#fff;font-weight:bold;font-size:14px;letter-spacing:-.1px">Sur</div>
<div class="b" style="left:249.5px;top:226.5px;width:16px;height:16.5px;background:linear-gradient(#fefefe,#ececec);border:1px solid #b9b9b9"></div>
<svg class="b" style="left:254px;top:233.5px;" width="7" height="4" viewBox="0 0 7 4"><path d="M0 0H7L3.5 4Z" fill="#555"/></svg>
<div class="b" style="left:27px;top:245px;width:240px;height:20px;background:#d9e1f2"></div>
<div class="b" style="left:27px;top:264px;width:240px;height:1px;background:#9db3df"></div>
<div class="t cell" style="left:29px;top:245.5px">Ene</div>
<div class="t cell num" style="left:107px;top:245.5px;width:76.8px;text-align:right">584</div>
<div class="t cell num" style="left:187px;top:245.5px;width:76.8px;text-align:right">863</div>
<div class="b" style="left:27px;top:284px;width:240px;height:1px;background:#9db3df"></div>
<div class="b" style="left:106px;top:265px;width:1px;height:19px;background:#d8d8d8"></div>
<div class="b" style="left:186px;top:265px;width:1px;height:19px;background:#d8d8d8"></div>
<div class="t cell" style="left:29px;top:265.5px">Feb</div>
<div class="t cell num" style="left:107px;top:265.5px;width:76.8px;text-align:right">503</div>
<div class="t cell num" style="left:187px;top:265.5px;width:76.8px;text-align:right">686</div>
<div class="b" style="left:27px;top:285px;width:240px;height:20px;background:#d9e1f2"></div>
<div class="b" style="left:27px;top:304px;width:240px;height:1px;background:#9db3df"></div>
<div class="t cell" style="left:29px;top:285.5px">Mar</div>
<div class="t cell num" style="left:107px;top:285.5px;width:76.8px;text-align:right">495</div>
<div class="t cell num" style="left:187px;top:285.5px;width:76.8px;text-align:right">599</div>
<div class="b" style="left:27px;top:324px;width:240px;height:1px;background:#9db3df"></div>
<div class="b" style="left:106px;top:305px;width:1px;height:19px;background:#d8d8d8"></div>
<div class="b" style="left:186px;top:305px;width:1px;height:19px;background:#d8d8d8"></div>
<div class="t cell" style="left:29px;top:305.5px">Abr</div>
<div class="t cell num" style="left:107px;top:305.5px;width:76.8px;text-align:right">677</div>
<div class="t cell num" style="left:187px;top:305.5px;width:76.8px;text-align:right">454</div>
<div class="b" style="left:27px;top:325px;width:240px;height:20px;background:#d9e1f2"></div>
<div class="b" style="left:27px;top:344px;width:240px;height:1px;background:#9db3df"></div>
<div class="t cell" style="left:29px;top:325.5px">May</div>
<div class="t cell num" style="left:107px;top:325.5px;width:76.8px;text-align:right">757</div>
<div class="t cell num" style="left:187px;top:325.5px;width:76.8px;text-align:right">531</div>
<div class="b" style="left:27px;top:364px;width:240px;height:1px;background:#9db3df"></div>
<div class="b" style="left:106px;top:345px;width:1px;height:19px;background:#d8d8d8"></div>
<div class="b" style="left:186px;top:345px;width:1px;height:19px;background:#d8d8d8"></div>
<div class="t cell" style="left:29px;top:345.5px">Jun</div>
<div class="t cell num" style="left:107px;top:345.5px;width:76.8px;text-align:right">490</div>
<div class="t cell num" style="left:187px;top:345.5px;width:76.8px;text-align:right">700</div>
<div class="b" style="left:27px;top:365px;width:240px;height:20px;background:#d9e1f2"></div>
<div class="b" style="left:27px;top:384px;width:240px;height:1px;background:#9db3df"></div>
<div class="t cell" style="left:29px;top:365.5px">Jul</div>
<div class="t cell num" style="left:107px;top:365.5px;width:76.8px;text-align:right">653</div>
<div class="t cell num" style="left:187px;top:365.5px;width:76.8px;text-align:right">858</div>
<div class="b" style="left:27px;top:404px;width:240px;height:1px;background:#9db3df"></div>
<div class="b" style="left:106px;top:385px;width:1px;height:19px;background:#d8d8d8"></div>
<div class="b" style="left:186px;top:385px;width:1px;height:19px;background:#d8d8d8"></div>
<div class="t cell" style="left:29px;top:385.5px">Ago</div>
<div class="t cell num" style="left:107px;top:385.5px;width:76.8px;text-align:right">995</div>
<div class="t cell num" style="left:187px;top:385.5px;width:76.8px;text-align:right">733</div>
<div class="b" style="left:27px;top:405px;width:240px;height:20px;background:#d9e1f2"></div>
<div class="b" style="left:27px;top:424px;width:240px;height:1px;background:#9db3df"></div>
<div class="t cell" style="left:29px;top:405.5px">Sep</div>
<div class="t cell num" style="left:107px;top:405.5px;width:76.8px;text-align:right">750</div>
<div class="t cell num" style="left:187px;top:405.5px;width:76.8px;text-align:right">928</div>
<div class="b" style="left:27px;top:444px;width:240px;height:1px;background:#9db3df"></div>
<div class="b" style="left:106px;top:425px;width:1px;height:19px;background:#d8d8d8"></div>
<div class="b" style="left:186px;top:425px;width:1px;height:19px;background:#d8d8d8"></div>
<div class="t cell" style="left:29px;top:425.5px">Oct</div>
<div class="t cell num" style="left:107px;top:425.5px;width:76.8px;text-align:right">581</div>
<div class="t cell num" style="left:187px;top:425.5px;width:76.8px;text-align:right">749</div>
<div class="b" style="left:27px;top:445px;width:240px;height:20px;background:#d9e1f2"></div>
<div class="b" style="left:27px;top:464px;width:240px;height:1px;background:#9db3df"></div>
<div class="t cell" style="left:29px;top:445.5px">Nov</div>
<div class="t cell num" style="left:107px;top:445.5px;width:76.8px;text-align:right">805</div>
<div class="t cell num" style="left:187px;top:445.5px;width:76.8px;text-align:right">966</div>
<div class="b" style="left:27px;top:484px;width:240px;height:1px;background:#9db3df"></div>
<div class="b" style="left:106px;top:465px;width:1px;height:19px;background:#d8d8d8"></div>
<div class="b" style="left:186px;top:465px;width:1px;height:19px;background:#d8d8d8"></div>
<div class="t cell" style="left:29px;top:465.5px">Dic</div>
<div class="t cell num" style="left:107px;top:465.5px;width:76.8px;text-align:right">955</div>
<div class="t cell num" style="left:187px;top:465.5px;width:76.8px;text-align:right">681</div>
<div class="b" style="left:266px;top:245px;width:1px;height:240px;background:#c3cfe9"></div>
<svg class="b" style="left:262px;top:481px;" width="5" height="5" viewBox="0 0 5 5"><path d="M4.5 0v4.5H0" fill="none" stroke="#2f5597" stroke-width="1.6"/></svg>
<svg class="b" style="left:305px;top:250px" width="558" height="334" viewBox="0 0 558 334" font-family="Liberation Sans,sans-serif"><style>.axs{font-size:11px;fill:#595959}</style><rect x=".5" y=".5" width="557" height="333" fill="#fff" stroke="#d9d9d9"/><path d="M44 55.5H543" stroke="#dcdcdc" stroke-width="1"/><text x="32.5" y="58.7" text-anchor="end" class="axs">1100</text><path d="M44 86.5H543" stroke="#dcdcdc" stroke-width="1"/><text x="32.5" y="89.7" text-anchor="end" class="axs">1000</text><path d="M44 117.5H543" stroke="#dcdcdc" stroke-width="1"/><text x="32.5" y="120.7" text-anchor="end" class="axs">900</text><path d="M44 148.5H543" stroke="#dcdcdc" stroke-width="1"/><text x="32.5" y="151.7" text-anchor="end" class="axs">800</text><path d="M44 179.5H543" stroke="#dcdcdc" stroke-width="1"/><text x="32.5" y="182.7" text-anchor="end" class="axs">700</text><path d="M44 210.5H543" stroke="#dcdcdc" stroke-width="1"/><text x="32.5" y="213.7" text-anchor="end" class="axs">600</text><path d="M44 241.5H543" stroke="#dcdcdc" stroke-width="1"/><text x="32.5" y="244.7" text-anchor="end" class="axs">500</text><path d="M44 272.5H543" stroke="#dcdcdc" stroke-width="1"/><text x="32.5" y="275.7" text-anchor="end" class="axs">400</text><text x="64.5" y="291" text-anchor="middle" class="axs">Ene</text><text x="106.03" y="291" text-anchor="middle" class="axs">Feb</text><text x="147.56" y="291" text-anchor="middle" class="axs">Mar</text><text x="189.09" y="291" text-anchor="middle" class="axs">Abr</text><text x="230.62" y="291" text-anchor="middle" class="axs">May</text><text x="272.15" y="291" text-anchor="middle" class="axs">Jun</text><text x="313.68" y="291" text-anchor="middle" class="axs">Jul</text><text x="355.21" y="291" text-anchor="middle" class="axs">Ago</text><text x="396.74" y="291" text-anchor="middle" class="axs">Sep</text><text x="438.27" y="291" text-anchor="middle" class="axs">Oct</text><text x="479.8" y="291" text-anchor="middle" class="axs">Nov</text><text x="521.33" y="291" text-anchor="middle" class="axs">Dic</text><polyline points="64.5,213.2 106.0,237.8 147.6,240.2 189.1,185.1 230.6,160.8 272.1,241.7 313.7,192.3 355.2,88.7 396.7,163.0 438.3,214.2 479.8,146.3 521.3,100.8" fill="none" stroke="#4472c4" stroke-width="3" stroke-linejoin="round" stroke-linecap="round"/><circle cx="64.5" cy="213.2" r="3.3" fill="#4472c4"/><circle cx="106.0" cy="237.8" r="3.3" fill="#4472c4"/><circle cx="147.6" cy="240.2" r="3.3" fill="#4472c4"/><circle cx="189.1" cy="185.1" r="3.3" fill="#4472c4"/><circle cx="230.6" cy="160.8" r="3.3" fill="#4472c4"/><circle cx="272.1" cy="241.7" r="3.3" fill="#4472c4"/><circle cx="313.7" cy="192.3" r="3.3" fill="#4472c4"/><circle cx="355.2" cy="88.7" r="3.3" fill="#4472c4"/><circle cx="396.7" cy="163.0" r="3.3" fill="#4472c4"/><circle cx="438.3" cy="214.2" r="3.3" fill="#4472c4"/><circle cx="479.8" cy="146.3" r="3.3" fill="#4472c4"/><circle cx="521.3" cy="100.8" r="3.3" fill="#4472c4"/><polyline points="64.5,128.7 106.0,182.3 147.6,208.7 189.1,252.6 230.6,229.3 272.1,178.1 313.7,130.2 355.2,168.1 396.7,109.0 438.3,163.3 479.8,97.5 521.3,183.9" fill="none" stroke="#ed7d31" stroke-width="3" stroke-linejoin="round" stroke-linecap="round"/><circle cx="64.5" cy="128.7" r="3.3" fill="#ed7d31"/><circle cx="106.0" cy="182.3" r="3.3" fill="#ed7d31"/><circle cx="147.6" cy="208.7" r="3.3" fill="#ed7d31"/><circle cx="189.1" cy="252.6" r="3.3" fill="#ed7d31"/><circle cx="230.6" cy="229.3" r="3.3" fill="#ed7d31"/><circle cx="272.1" cy="178.1" r="3.3" fill="#ed7d31"/><circle cx="313.7" cy="130.2" r="3.3" fill="#ed7d31"/><circle cx="355.2" cy="168.1" r="3.3" fill="#ed7d31"/><circle cx="396.7" cy="109.0" r="3.3" fill="#ed7d31"/><circle cx="438.3" cy="163.3" r="3.3" fill="#ed7d31"/><circle cx="479.8" cy="97.5" r="3.3" fill="#ed7d31"/><circle cx="521.3" cy="183.9" r="3.3" fill="#ed7d31"/><text x="278.5" y="32.5" text-anchor="middle" font-size="20" font-weight="bold" fill="#595959" letter-spacing=".4">Ventas del año</text><path d="M224.5 314.5h25" stroke="#4472c4" stroke-width="3" stroke-linecap="round"/><circle cx="237" cy="314.5" r="3.3" fill="#4472c4"/><text x="253" y="318.5" class="axs">Norte</text><path d="M292.5 314.5h25" stroke="#ed7d31" stroke-width="3" stroke-linecap="round"/><circle cx="305" cy="314.5" r="3.3" fill="#ed7d31"/><text x="320" y="318.5" class="axs">Sur</text></svg>
<div class="b" style="left:885px;top:207px;width:15px;height:462px;background:#d8d8d8"></div>
<div class="b" style="left:885px;top:207px;width:15px;height:15px;background:#fff;border:1px solid #c0c0c0"></div>
<svg class="b" style="left:889px;top:212px;" width="7" height="4" viewBox="0 0 7 4"><path d="M0 4L3.5 0 7 4z" fill="#555"/></svg>
<div class="b" style="left:885px;top:222px;width:15px;height:411px;background:#fff;border:1px solid #c0c0c0"></div>
<div class="b" style="left:885px;top:655.5px;width:15px;height:14px;background:#fff;border:1px solid #c0c0c0"></div>
<svg class="b" style="left:889px;top:660.5px;" width="7" height="4" viewBox="0 0 7 4"><path d="M0 0H7L3.5 4Z" fill="#555"/></svg>
<div class="b" style="left:0px;top:670px;width:903px;height:27px;background:#e6e6e6"></div>
<svg class="b" style="left:27.7px;top:679.3px;" width="4.2" height="6.4" viewBox="0 0 4.2 6.4"><path d="M4.2 0v6.4L0 3.2z" fill="#c6c6c6"/></svg>
<svg class="b" style="left:57px;top:679.3px;" width="4.2" height="6.4" viewBox="0 0 4.2 6.4"><path d="M0 0v6.4l4.2-3.2z" fill="#c6c6c6"/></svg>
<div class="b" style="left:101px;top:669px;width:61px;height:25px;background:#fff;border-bottom:2px solid #217346;border-left:1px solid #c6c6c6"></div>
<div class="t " style="left:113.01px;top:672.5px;font-size:13.5px;letter-spacing:-0.351px;font-weight:bold;color:#217346">Hoja1</div>
<div class="t " style="left:173.19px;top:672.5px;font-size:13.5px;letter-spacing:-0.073px;color:#444">Hoja2</div>
<div class="b" style="left:220px;top:674px;width:1px;height:18px;background:#ababab"></div>
<svg class="b" style="left:253.5px;top:675px;" width="16" height="16" viewBox="0 0 16 16"><circle cx="8" cy="8" r="7" fill="none" stroke="#7a7a7a" stroke-width="1.1"/><path d="M8 4.3v7.4M4.3 8h7.4" stroke="#666" stroke-width="1.3"/></svg>
<div class="b" style="left:542px;top:677.5px;width:1.5px;height:1.5px;background:#b0b0b0"></div>
<div class="b" style="left:542px;top:682px;width:1.5px;height:1.5px;background:#b0b0b0"></div>
<div class="b" style="left:542px;top:686.5px;width:1.5px;height:1.5px;background:#b0b0b0"></div>
<div class="b" style="left:559px;top:676.5px;width:324px;height:14px;background:#d8d8d8"></div>
<div class="b" style="left:559px;top:676.5px;width:15px;height:14px;background:#fff;border:1px solid #b5b5b5"></div>
<svg class="b" style="left:564px;top:680px;" width="4" height="7" viewBox="0 0 4 7"><path d="M4 0v7L0 3.5z" fill="#555"/></svg>
<div class="b" style="left:574px;top:676.5px;width:224px;height:14px;background:#fff;border:1px solid #b5b5b5;border-left:0"></div>
<div class="b" style="left:868.5px;top:676.5px;width:15px;height:14px;background:#fff;border:1px solid #b5b5b5"></div>
<svg class="b" style="left:874.5px;top:680px;" width="4" height="7" viewBox="0 0 4 7"><path d="M0 0v7l4-3.5z" fill="#555"/></svg>
<div class="b" style="left:0px;top:697px;width:1280px;height:23px;background:#f3f3f3"></div>
<div class="t " style="left:7.62px;top:698.3px;font-size:12px;letter-spacing:-0.367px;color:#444">Listo</div>
<svg class="b" style="left:51px;top:701px;" width="15" height="14" viewBox="0 0 15 14"><rect x="2.5" y="1.8" width="11.5" height="10.7" fill="#fdfdfd" stroke="#555"/><rect x="2.5" y="1.3" width="11.5" height="2.4" fill="#555"/><path d="M4.3 6.3h8M4.3 8.3h8M4.3 10.3h8" stroke="#555" stroke-width="1.1" stroke-dasharray="2 1"/><circle cx="3.7" cy="3.1" r="3" fill="#555" stroke="#f3f3f3" stroke-width=".6"/></svg>
<div class="b" style="left:976.5px;top:697px;width:37.5px;height:21px;background:#c8c8c8"></div>
<svg class="b" style="left:988px;top:700.5px;" width="14" height="14" viewBox="0 0 14 14"><path d="M.5 .5h12.5v12.5H.5zM.5 4.7h12.5M.5 8.9h12.5M4.7 .5v12.5M8.9 .5v12.5" fill="none" stroke="#555"/></svg>
<svg class="b" style="left:1026px;top:700.5px;" width="15" height="14" viewBox="0 0 15 14"><rect x=".5" y=".5" width="13.5" height="12.5" fill="none" stroke="#555"/><rect x="3.5" y="3.5" width="7.5" height="7" fill="none" stroke="#555"/><path d="M5 5.7h4.5M5 7.5h4.5M5 9.3h4.5" stroke="#777" stroke-width=".7"/></svg>
<svg class="b" style="left:1064px;top:700.5px;" width="15" height="14" viewBox="0 0 15 14"><path d="M.5 .5h13.5v12.5H.5z" fill="none" stroke="#555"/><path d="M4.5 .5v6.5h5.5v-6.5" fill="none" stroke="#555"/></svg>
<div class="b" style="left:1095px;top:707px;width:6px;height:2px;background:#555"></div>
<div class="b" style="left:1105px;top:708px;width:100px;height:1px;background:#9a9a9a"></div>
<div class="b" style="left:1153px;top:702px;width:3.5px;height:12.5px;background:#555"></div>
<div class="b" style="left:1208.7px;top:707px;width:8.3px;height:2px;background:#555"></div>
<div class="b" style="left:1211.85px;top:703.85px;width:2px;height:8.3px;background:#555"></div>
<div class="t " style="left:1233.03px;top:697.8px;font-size:11.5px;letter-spacing:-0.843px;color:#444">100%</div>
<div class="b" style="left:0px;top:36px;width:1px;height:684px;background:#1f6f45"></div>
<div class="b" style="left:1279px;top:66px;width:1px;height:654px;background:#3a8059"></div>
<div class="b" style="left:0px;top:718.5px;width:1280px;height:1.5px;background:#1f6f45"></div>
<div class="b" style="left:903px;top:205px;width:376px;height:492px;background:#e6e6e6;border-left:1px solid #c6c6c6"></div>
<div class="t " style="left:916.2px;top:221.5px;font-size:22px;letter-spacing:-0.48px;color:#47876a;line-height:26px;height:26px;margin-top:-3px">Dar formato a eje</div>
<svg class="b" style="left:1209.5px;top:225px;" width="9" height="5" viewBox="0 0 9 5"><path d="M0 0H9L4.5 5Z" fill="#666"/></svg>
<svg class="b" style="left:1249.5px;top:222px;" width="11" height="11" viewBox="0 0 11 11"><path d="M1 1l9 9M10 1l-9 9" stroke="#444" stroke-width="1.9"/></svg>
<div class="t " style="left:921.51px;top:247px;font-size:12px;letter-spacing:-0.231px;font-weight:bold;color:#262626">Opciones del eje</div>
<svg class="b" style="left:1020px;top:254.5px;" width="9" height="5" viewBox="0 0 9 5"><path d="M0 0H9L4.5 5Z" fill="#666"/></svg>
<div class="t " style="left:1047.44px;top:247px;font-size:12px;letter-spacing:-0.104px;color:#333">Opciones de texto</div>
<svg class="b" style="left:921px;top:277px;" width="27" height="25" viewBox="0 0 27 25"><path d="M12 3.5l8.5 8.5-9.5 9.5L2.5 13z" fill="#fff" stroke="#666" stroke-width="1.3"/><path d="M10.5 9V4a1.7 1.7 0 0 1 3.4 0v5" fill="none" stroke="#666" stroke-width="1.1"/><circle cx="12.2" cy="9.5" r="1" fill="#666"/><path d="M17.5 8c4 .5 7 3 7 7 0 2.5-.5 4.5-1.5 6.5 0-4-1-6.5-3-8z" fill="#7a7a7a"/></svg>
<svg class="b" style="left:963px;top:277px;" width="24" height="26" viewBox="0 0 24 26"><path d="M11.5 1.5l9.2 6.7-3.5 10.8H5.8L2.3 8.2z" fill="#fff" stroke="#666" stroke-width="1.3"/><path d="M5.5 19.5h12" stroke="#666" stroke-width="1.8"/><path d="M5.5 20.5l-1.5 4M17.5 20.5l1.5 4" stroke="#cfcfcf" stroke-width="1.2"/></svg>
<svg class="b" style="left:1003px;top:279px;" width="23" height="22" viewBox="0 0 23 22"><rect x="6" y="6" width="15" height="15" fill="#6e6e6e"/><path d="M6 2.5h15M6.5 .5v4M20.5 .5v4M2.5 6v15M.5 6.5h4M.5 20.5h4" stroke="#666" stroke-width="1"/><path d="M13.5 8.5v10M8.5 13.5h10M11.8 10l1.7-1.7 1.7 1.7M11.8 17l1.7 1.7 1.7-1.7M10 11.8l-1.7 1.7 1.7 1.7M17 11.8l1.7 1.7-1.7 1.7" fill="none" stroke="#fff" stroke-width="1"/></svg>
<div class="b" style="left:1044px;top:285px;width:5.6px;height:15px;background:#217346"></div>
<div class="b" style="left:1051px;top:279px;width:5.7px;height:21px;background:#217346"></div>
<div class="b" style="left:1058.3px;top:282px;width:5.7px;height:18px;background:#217346"></div>
<div class="b" style="left:918px;top:319px;width:347px;height:1px;background:#cfcfcf"></div>
<svg class="b" style="left:1047px;top:311px;" width="14" height="9" viewBox="0 0 14 9"><path d="M0 8.5h1.5L7 2.5l5.5 6H14" fill="#e6e6e6" stroke="#cfcfcf"/></svg>
<div class="b" style="left:1250px;top:326px;width:14px;height:350px;background:#d8d8d8"></div>
<div class="b" style="left:1250px;top:326px;width:14px;height:15px;background:#fff;border:1px solid #c0c0c0"></div>
<svg class="b" style="left:1254.8px;top:331.5px;" width="7" height="4" viewBox="0 0 7 4"><path d="M0 4L3.5 0 7 4z" fill="#555"/></svg>
<div class="b" style="left:1250px;top:341px;width:14px;height:233px;background:#fff;border:1px solid #c0c0c0"></div>
<div class="b" style="left:1250px;top:663px;width:14px;height:13px;background:#fff;border:1px solid #c0c0c0"></div>
<svg class="b" style="left:1253.5px;top:667.5px;" width="7" height="4" viewBox="0 0 7 4"><path d="M0 0H7L3.5 4Z" fill="#555"/></svg>
<div class="t pn" style="left:938.08px;top:431px;font-size:12px;letter-spacing:-0.335px;">Unidades</div>
<div class="t pn" style="left:949.02px;top:456.5px;font-size:12px;letter-spacing:0.21px;">Ma<u>y</u>or</div>
<div class="b" style="left:1081px;top:454.5px;width:74px;height:19.5px;background:#fff;border:1px solid #ababab"></div><div class="t " style="left:1088.98px;top:454.45px;font-size:10.8px;letter-spacing:-0.248px;color:#555">100.0</div>
<div class="t pn" style="left:1172.28px;top:456.5px;font-size:12px;letter-spacing:0.355px;">Automático</div>
<div class="t pn" style="left:949.02px;top:487.5px;font-size:12px;letter-spacing:0.167px;">M<u>e</u>nor</div>
<div class="b" style="left:1081px;top:485.5px;width:74px;height:19.5px;background:#fff;border:1px solid #ababab"></div><div class="t " style="left:1088.96px;top:485.45px;font-size:10.8px;letter-spacing:-0.322px;color:#555">20.0</div>
<div class="t pn" style="left:1172.28px;top:487.5px;font-size:12px;letter-spacing:0.355px;">Automático</div>
<div class="t pn" style="left:938.02px;top:515px;font-size:12px;letter-spacing:-0.14px;">El eje horizontal cruza</div>
<svg class="b" style="left:949.5px;top:546px;" width="13" height="13" viewBox="0 0 13 13"><circle cx="6.5" cy="6.5" r="5.5" fill="#fff" stroke="#8a8a8a"/><circle cx="6.5" cy="6.5" r="2.8" fill="#444"/></svg>
<div class="t pn" style="left:966.98px;top:543px;font-size:12px;letter-spacing:0.355px;">Aut<u>o</u>mático</div>
<svg class="b" style="left:949.5px;top:569px;" width="13" height="13" viewBox="0 0 13 13"><circle cx="6.5" cy="6.5" r="5.5" fill="#fff" stroke="#8a8a8a"/></svg>
<div class="t pn" style="left:966.95px;top:565.5px;font-size:12px;letter-spacing:-0.187px;">Va<u>l</u>or del eje</div>
<div class="b" style="left:1189.5px;top:567px;width:55px;height:19.5px;background:#ececec;border:1px solid #dedede"></div><div class="t " style="left:1196.08px;top:566.95px;font-size:10.8px;letter-spacing:0.01px;color:#a8a8a8">0.0</div>
<svg class="b" style="left:949.5px;top:591.5px;" width="13" height="13" viewBox="0 0 13 13"><circle cx="6.5" cy="6.5" r="5.5" fill="#fff" stroke="#8a8a8a"/></svg>
<div class="t pn" style="left:966.95px;top:588.5px;font-size:12px;letter-spacing:-0.083px;">Valor má<u>x</u>imo del eje</div>
<div class="t pn" style="left:938.58px;top:614px;font-size:12px;letter-spacing:-0.148px;"><u>U</u>nidades de visualización</div>
<div class="b" style="left:1154.5px;top:614.5px;width:90.5px;height:19.5px;background:#fff;border:1px solid #ababab"></div><div class="t " style="left:1161.38px;top:614.45px;font-size:12.5px;letter-spacing:-0.021px;color:#333">Ninguno</div>
<svg class="b" style="left:1232.5px;top:622.5px;" width="7" height="4" viewBox="0 0 7 4"><path d="M0 0H7L3.5 4Z" fill="#555"/></svg>
<div class="b" style="left:950px;top:651px;width:11.5px;height:11.5px;background:#f7f7f7;border:1px solid #dcdcdc"></div>
<div class="t pn" style="left:966.52px;top:639.5px;font-size:12px;letter-spacing:-0.066px;color:#a3a3a3">Mostrar etiqueta de uni<u>d</u>ades de presentación en el</div>
<div class="t pn" style="left:966.5px;top:655.5px;font-size:12px;letter-spacing:0.247px;color:#a3a3a3">gráfico</div>
<div class="b" style="left:912px;top:316px;width:342px;height:125.5px;border:6px solid #f8a90f;border-radius:10px;background:#e8e8e8;box-shadow:inset 0 0 14px 3px rgba(0,0,0,.17), 0 4px 12px 1px rgba(0,0,0,.24)"></div>
<svg class="b" style="left:925px;top:330px;" width="7" height="7" viewBox="0 0 7 7"><path d="M7 0v7H0z" fill="#444"/></svg>
<div class="t " style="left:938.51px;top:325px;font-size:12px;letter-spacing:-0.251px;font-weight:bold;color:#217346">Opciones del eje</div>
<div class="t pn" style="left:938.52px;top:346.5px;font-size:12px;letter-spacing:-0.027px;">Límites</div>
<div class="t pn" style="left:949.02px;top:372.5px;font-size:12px;letter-spacing:0.528px;">Mí<u>n</u>imo</div>
<div class="b" style="left:1081px;top:370.5px;width:74px;height:19.5px;background:#fff;border:1px solid #3f7d5f"></div><div class="t " style="left:1089.76px;top:370.45px;font-size:10.8px;letter-spacing:-0.443px;color:#555">400.0</div>
<div class="b" style="left:1088px;top:373px;width:1px;height:13px;background:#222"></div>
<div class="b" style="left:1164px;top:370.5px;width:81.5px;height:25px;background:#fdfdfd;border:1px solid #bcbcbc"></div>
<div class="t pn" style="left:1171.52px;top:373px;font-size:12px;letter-spacing:0.214px;">Restablecer</div>
<div class="t pn" style="left:949.02px;top:403.5px;font-size:12px;letter-spacing:0.295px;"><u>M</u>áximo</div>
<div class="b" style="left:1081px;top:401px;width:74px;height:19.5px;background:#fff;border:1px solid #ababab"></div><div class="t " style="left:1088.78px;top:400.95px;font-size:10.8px;letter-spacing:0.001px;color:#555">1100.0</div>
<div class="t pn" style="left:1172.28px;top:403.5px;font-size:12px;letter-spacing:0.355px;">Automático</div>
<svg class="b" style="left:1109.7px;top:398.2px;" width="14" height="21" viewBox="0 0 14 21"><path d="M1 1v15.5l3.6-3.4 2.6 6.2 2.4-1-2.6-6H12z" fill="#fff" stroke="#000" stroke-width="1.15" stroke-linejoin="round"/></svg>
</div></body></html>
